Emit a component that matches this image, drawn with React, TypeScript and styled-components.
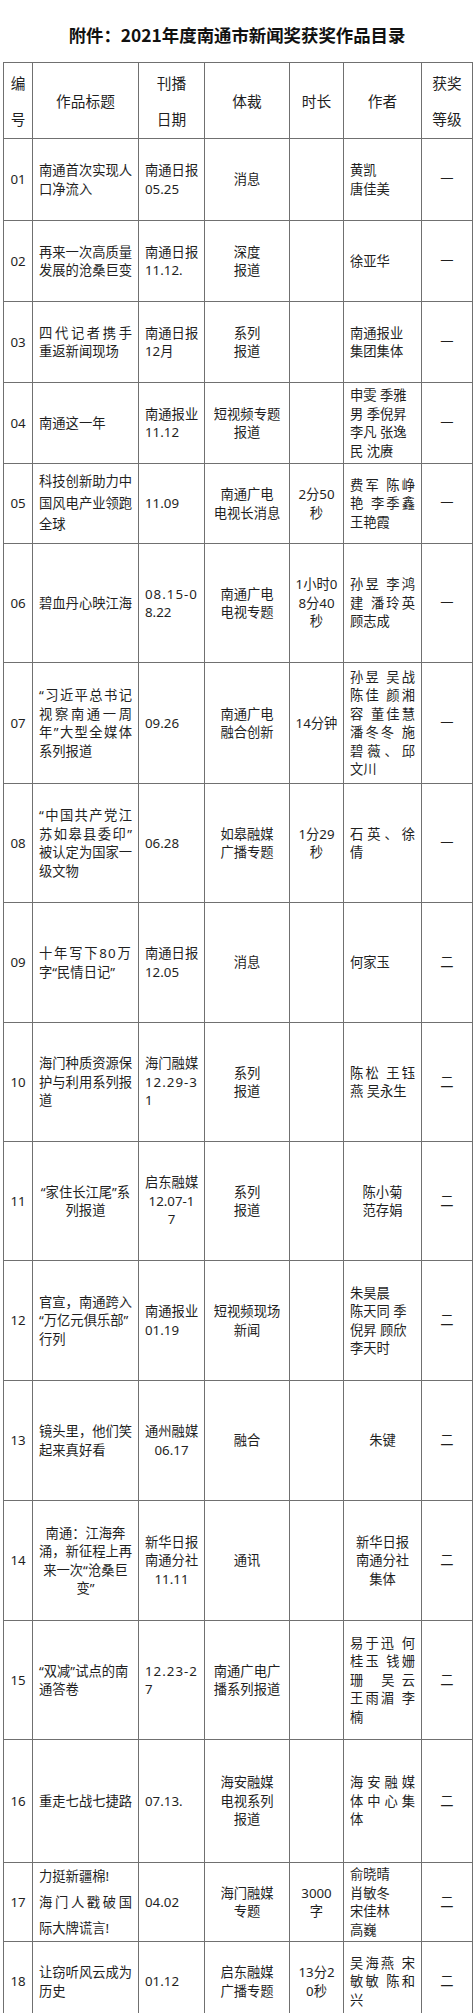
import React from 'react';
import styled, { createGlobalStyle } from 'styled-components';

const GlobalStyle = createGlobalStyle`
  html, body {
    margin: 0;
    padding: 0;
    background: #ffffff;
  }
  body {
    font-family: "Noto Sans", "Noto Sans CJK SC", sans-serif;
    color: #1f1f1f;
  }
`;

const Page = styled.div`
  width: 474px;
  padding-bottom: 40px;
`;

const Heading = styled.h1`
  margin: 0;
  padding-top: 24px;
  height: 38px;
  line-height: 22px;
  font-family: "Noto Sans CJK SC", sans-serif;
  font-size: 17.4px;
  font-weight: 700;
  color: #111111;
  text-align: center;
`;

const Table = styled.table`
  margin-left: 3px;
  width: 469px;
  border-collapse: collapse;
  table-layout: fixed;
`;

const Row = styled.tr<{ $h: number }>`
  height: ${(p) => p.$h}px;
`;

const HeadCell = styled.th`
  border: 1px solid #707070;
  padding: 0;
  font-size: 14.7px;
  font-weight: 400;
  line-height: 36px;
  text-align: center;
  vertical-align: middle;
`;

const Cell = styled.td<{ $align?: 'left' | 'center'; $lh?: number; $pad?: number }>`
  border: 1px solid #707070;
  padding: 0 ${(p) => p.$pad ?? 6}px 0 ${(p) => p.$pad ?? 6}px;
  font-size: 13.3px;
  line-height: ${(p) => p.$lh ?? 18.5}px;
  text-align: ${(p) => p.$align ?? 'left'};
  vertical-align: middle;
`;

const Line = styled.div<{ $spread?: boolean; $ls?: number }>`
  white-space: nowrap;
  letter-spacing: ${(p) => p.$ls ?? 0}px;
  ${(p) =>
    p.$spread &&
    `
    text-align: justify;
    text-align-last: justify;
  `}
`;

type L = string | { t: string; s?: boolean; ls?: number };

const S = (t: string, ls?: number): L => ({ t, s: true, ls });

interface Entry {
  no: string;
  h: number;
  title: L[];
  date: L[];
  genre: L[];
  dur?: L[];
  author: L[];
  level: string;
  titleCenter?: boolean;
  dateCenter?: boolean;
  authorCenter?: boolean;
  titleLh?: number;
}

const entries: Entry[] = [
  { no: '01', h: 82, title: ['南通首次实现人', '口净流入'], date: ['南通日报', '05.25'], genre: ['消息'], author: ['黄凯', '唐佳美'], level: '一' },
  { no: '02', h: 81, title: ['再来一次高质量', '发展的沧桑巨变'], date: ['南通日报', '11.12.'], genre: ['深度', '报道'], author: ['徐亚华'], level: '一' },
  { no: '03', h: 81, title: [S('四代记者携手'), '重返新闻现场'], date: ['南通日报', '12月'], genre: ['系列', '报道'], author: ['南通报业', '集团集体'], level: '一' },
  { no: '04', h: 81, title: ['南通这一年'], date: ['南通报业', '11.12'], genre: ['短视频专题', '报道'], author: ['申雯 季雅', '男 季倪昇', '李凡 张逸', '民 沈赓'], level: '一' },
  { no: '05', h: 80, title: ['科技创新助力中', '国风电产业领跑', '全球'], titleLh: 21.5, date: ['11.09'], genre: ['南通广电', '电视长消息'], dur: ['2分50', '秒'], author: [S('费军 陈峥'), S('艳 李季鑫'), '王艳霞'], level: '一' },
  { no: '06', h: 119, title: ['碧血丹心映江海'], date: [S('08.15-0', 1), '8.22'], genre: ['南通广电', '电视专题'], dur: ['1小时0', '8分40', '秒'], author: [S('孙昱 李鸿'), S('建 潘玲英'), '顾志成'], level: '一' },
  { no: '07', h: 121, title: [S('“习近平总书记'), S('视察南通一周'), S('年”大型全媒体'), '系列报道'], date: ['09.26'], genre: ['南通广电', '融合创新'], dur: ['14分钟'], author: [S('孙昱 吴战'), S('陈佳 颜湘'), S('容 董佳慧'), S('潘冬冬 施'), S('碧薇、邱'), '文川'], level: '一' },
  { no: '08', h: 119, title: [S('“中国共产党江'), S('苏如皋县委印”'), '被认定为国家一', '级文物'], date: ['06.28'], genre: ['如皋融媒', '广播专题'], dur: ['1分29', '秒'], author: [S('石英、徐'), '倩'], level: '一' },
  { no: '09', h: 120, title: [S('十年写下80万', 1.2), '字“民情日记”'], date: ['南通日报', '12.05'], genre: ['消息'], author: ['何家玉'], level: '二' },
  { no: '10', h: 119, title: ['海门种质资源保', '护与利用系列报', '道'], date: ['海门融媒', S('12.29-3', 1), '1'], genre: ['系列', '报道'], author: [S('陈松 王钰'), '燕 吴永生'], level: '二' },
  { no: '11', h: 119, title: ['“家住长江尾”系', '列报道'], titleCenter: true, date: ['启东融媒', '12.07-1', '7'], dateCenter: true, genre: ['系列', '报道'], author: ['陈小菊', '范存娟'], authorCenter: true, level: '二' },
  { no: '12', h: 120, title: ['官宣，南通跨入', '“万亿元俱乐部”', '行列'], date: ['南通报业', '01.19'], genre: ['短视频现场', '新闻'], author: ['朱昊晨', '陈天同 季', '倪昇 顾欣', '李天时'], level: '二' },
  { no: '13', h: 120, title: ['镜头里，他们笑', '起来真好看'], date: ['通州融媒', '06.17'], dateCenter: true, genre: ['融合'], author: ['朱键'], authorCenter: true, level: '二' },
  { no: '14', h: 120, title: ['南通：江海奔', '涌，新征程上再', '来一次“沧桑巨', '变”'], titleCenter: true, date: ['新华日报', '南通分社', '11.11'], dateCenter: true, genre: ['通讯'], author: ['新华日报', '南通分社', '集体'], authorCenter: true, level: '二' },
  { no: '15', h: 119, title: ['“双减”试点的南', '通答卷'], date: [S('12.23-2', 1), '7'], genre: ['南通广电广', '播系列报道'], author: [S('易于迅 何'), S('桂玉 钱姗'), S('珊 吴云'), S('王雨湄 李'), '楠'], level: '二' },
  { no: '16', h: 123, title: ['重走七战七捷路'], date: ['07.13.'], genre: ['海安融媒', '电视系列', '报道'], author: [S('海安融媒'), S('体中心集'), '体'], level: '二' },
  { no: '17', h: 75, title: ['力挺新疆棉!', S('海门人戳破国'), '际大牌谎言!'], titleLh: 26, date: ['04.02'], genre: ['海门融媒', '专题'], dur: ['3000', '字'], author: ['俞晓晴', '肖敏冬', '宋佳林', '高巍'], level: '二' },
  { no: '18', h: 80, title: ['让窃听风云成为', '历史'], date: ['01.12'], genre: ['启东融媒', '广播专题'], dur: ['13分2', '0秒'], author: [S('吴海燕 宋'), S('敏敏 陈和'), '兴'], level: '二' },
];

const Lines = ({ items }: { items: L[] }) => (
  <>
    {items.map((item, i) =>
      typeof item === 'string' ? (
        <Line key={i}>{item}</Line>
      ) : (
        <Line key={i} $spread={item.s} $ls={item.ls}>
          {item.t}
        </Line>
      )
    )}
  </>
);

const widths = [29, 106, 66, 85, 54, 78, 51];

export default function App() {
  return (
    <Page>
      <GlobalStyle />
      <Heading>附件：2021年度南通市新闻奖获奖作品目录</Heading>
      <Table>
        <colgroup>
          {widths.map((w, i) => (
            <col key={i} style={{ width: w }} />
          ))}
        </colgroup>
        <thead>
          <Row $h={76}>
            <HeadCell>编<br />号</HeadCell>
            <HeadCell>作品标题</HeadCell>
            <HeadCell>刊播<br />日期</HeadCell>
            <HeadCell>体裁</HeadCell>
            <HeadCell>时长</HeadCell>
            <HeadCell>作者</HeadCell>
            <HeadCell>获奖<br />等级</HeadCell>
          </Row>
        </thead>
        <tbody>
          {entries.map((e) => (
            <Row key={e.no} $h={e.h}>
              <Cell $align="center" $pad={0}>{e.no}</Cell>
              <Cell $align={e.titleCenter ? 'center' : 'left'} $lh={e.titleLh}>
                <Lines items={e.title} />
              </Cell>
              <Cell $align={e.dateCenter ? 'center' : 'left'}>
                <Lines items={e.date} />
              </Cell>
              <Cell $align="center" $pad={2}>
                <Lines items={e.genre} />
              </Cell>
              <Cell $align="center" $pad={2}>
                <Lines items={e.dur ?? []} />
              </Cell>
              <Cell $align={e.authorCenter ? 'center' : 'left'}>
                <Lines items={e.author} />
              </Cell>
              <Cell $align="center" $pad={0}>{e.level}</Cell>
            </Row>
          ))}
        </tbody>
      </Table>
    </Page>
  );
}
